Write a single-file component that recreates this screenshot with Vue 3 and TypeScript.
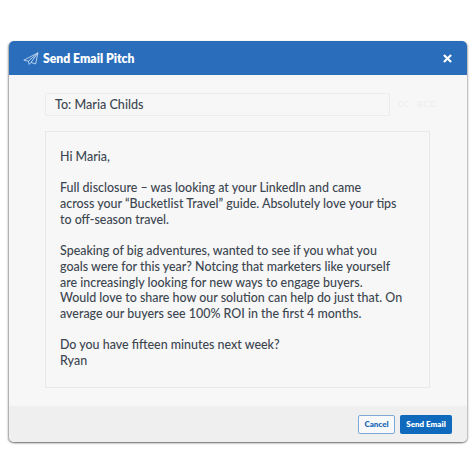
<script setup lang="ts">
const paragraphs: string[][] = [
  ['Hi Maria,'],
  ['Full disclosure – was looking at your LinkedIn and came', 'across your “Bucketlist Travel” guide. Absolutely love your tips', 'to off-season travel.'],
  ['Speaking of big adventures, wanted to see if you what you', 'goals were for this year? Notcing that marketers like yourself', 'are increasingly looking for new ways to engage buyers.', 'Would love to share how our solution can help do just that. On', 'average our buyers see 100% ROI in the first 4 months.'],
  ['Do you have fifteen minutes next week?', 'Ryan'],
]
</script>

<template>
  <div class="page">
    <section class="modal">
      <header class="head">
        <svg class="plane" viewBox="0 0 16 13" width="16" height="13" fill="none" stroke="#c3d9f1" stroke-width=".9" stroke-linejoin="round">
          <path d="M15 .8 .8 8.2l4.6 1L15 .8 8 10.4l4.6 1.6L15 .8Z" />
          <path d="M5.4 9.2 6.2 12.4 8 10.4" />
        </svg>
        <h1 class="title">Send Email Pitch</h1>
        <svg class="close" viewBox="0 0 10 10" width="9" height="9" stroke="#fff" stroke-width="2.4" stroke-linecap="butt">
          <path d="M1 1l8 8M9 1 1 9" />
        </svg>
      </header>
      <div class="body">
        <div class="to-row">
          <div class="to">To: Maria Childs</div>
          <div class="cc"><span>CC</span><span>BCC</span></div>
        </div>
        <article class="letter">
          <p v-for="(para, i) in paragraphs" :key="i">
            <span v-for="line in para" :key="line" class="line">{{ line }}</span>
          </p>
        </article>
      </div>
      <footer class="foot">
        <button class="btn cancel">Cancel</button>
        <button class="btn send">Send Email</button>
      </footer>
    </section>
  </div>
</template>

<style>
html, body { margin: 0; background: #fff; }
</style>

<style scoped>
.page {
  width: 474px;
  height: 474px;
  padding: 41px 7px 0 9px;
  box-sizing: border-box;
  font-family: "Lato", "Noto Sans", sans-serif;
}
.modal {
  height: 401px;
  display: flex;
  flex-direction: column;
  background: #f7f7f7;
  border-radius: 5px;
  box-shadow: -1px 1px 2px rgba(0, 0, 0, .4), 1px 1px 2px rgba(0, 0, 0, .3);
  overflow: hidden;
}
.head {
  height: 34px;
  flex: none;
  display: flex;
  align-items: center;
  padding: 0 15px 0 14px;
  background: #2a6ebb;
  color: #fff;
}
.plane { margin-right: 4px; }
.title {
  margin: 0;
  flex: 1;
  font-size: 12.2px;
  font-weight: 800;
}
.body {
  flex: 1;
  padding: 18px 37px 18px 36px;
}
.to-row {
  position: relative;
  margin-right: 40px;
}
.to {
  height: 23px;
  box-sizing: border-box;
  border: 1px solid #ececec;
  border-radius: 2px;
  padding-left: 9px;
  font-size: 12.6px;
  font-weight: 500;
  line-height: 21px;
  color: #3c4650;
}
.cc {
  position: absolute;
  left: 353px;
  top: 6px;
  display: flex;
  gap: 7px;
  font-size: 8px;
  letter-spacing: 1px;
  color: #ececec;
}
.letter {
  margin-top: 15px;
  height: 257px;
  box-sizing: border-box;
  border: 1px solid #e8e8e8;
  padding: 17px 14px 0;
  font-size: 12.45px;
  font-weight: 500;
  line-height: 15.7px;
  color: #3c4650;
  white-space: nowrap;
}
.letter p { margin: 0 0 15.7px; }
.line { display: block; }
.foot {
  height: 36px;
  flex: none;
  display: flex;
  justify-content: flex-end;
  align-items: center;
  gap: 5px;
  padding-right: 15px;
  background: #efefef;
}
.btn {
  height: 19px;
  box-sizing: border-box;
  padding: 0;
  border-radius: 2px;
  font-family: inherit;
  font-size: 8px;
  font-weight: 800;
}
.cancel {
  width: 37px;
  background: #f7f9fb;
  border: 1px solid #7ea9d6;
  color: #2a6ebb;
}
.send {
  width: 52px;
  background: #0f69bd;
  border: 0;
  color: #fff;
}
</style>
